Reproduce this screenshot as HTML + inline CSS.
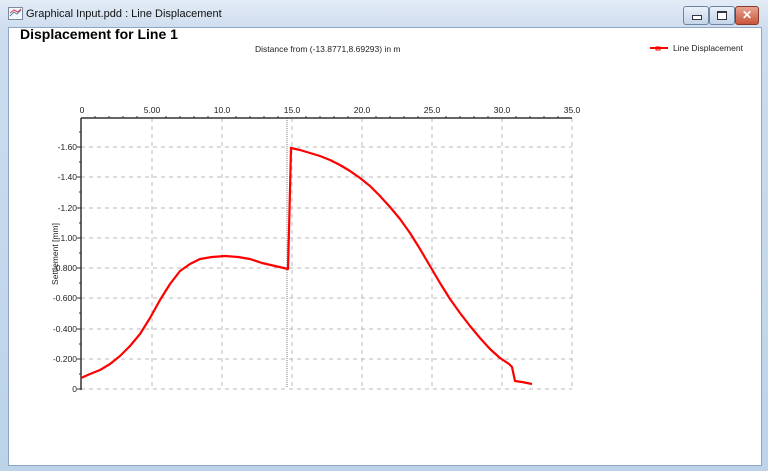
<!DOCTYPE html>
<html><head><meta charset="utf-8"><style>
html,body{margin:0;padding:0;width:768px;height:471px;overflow:hidden;background:#bcd3ea;font-family:"Liberation Sans",Arial,sans-serif}
.frame{position:absolute;left:0;top:0;width:768px;height:471px;background:linear-gradient(#e3ecf6,#cddcee 30px,#bcd3ea);}
.title{position:absolute;left:26px;top:8px;font-size:11px;color:#111}
.client{position:absolute;left:8px;top:27px;width:752px;height:437px;background:#fff;border:1px solid #8da7c4}
.btn{position:absolute;top:6px;height:17px;border:1px solid #6d85a3;border-radius:3px;background:linear-gradient(#e9f0f8,#c5d5e8)}
</style></head><body>
<div class="frame"></div>
<svg style="position:absolute;left:8px;top:7px" width="15" height="13"><rect x="0.5" y="0.5" width="14" height="12" fill="#f4f7fb" stroke="#7a8aa0"/><path d="M2 9 L6 5 L9 7 L13 3" stroke="#5d7fb0" fill="none"/><path d="M2 6 L6 3 L10 5 L13 2" stroke="#d44" fill="none"/></svg>
<div class="title">Graphical Input.pdd : Line Displacement</div>
<div class="btn" style="left:683px;width:24px"><div style="position:absolute;left:8px;top:8px;width:8px;height:3px;background:#fff;border:1px solid #334"></div></div>
<div class="btn" style="left:709px;width:24px"><div style="position:absolute;left:7px;top:4px;width:8px;height:6px;border:1px solid #334;border-top-width:2px;background:#fff"></div></div>
<div class="btn" style="left:735px;width:22px;background:linear-gradient(#e8a392,#c8553c);border-color:#8a3a2a;color:#fff;font-weight:bold;font-size:12px;text-align:center;line-height:16px">✕</div>
<div class="client"></div>
<svg style="position:absolute;left:0;top:0" width="768" height="471" font-family="Liberation Sans, Arial, sans-serif">
<text x="20" y="39" font-size="14" font-weight="bold" fill="#000">Displacement for Line 1</text>
<text x="255" y="52" font-size="8.5" fill="#222">Distance from (-13.8771,8.69293) in m</text>
<line x1="650" y1="48" x2="668" y2="48" stroke="#f00" stroke-width="2"/>
<rect x="656" y="47" width="4" height="3" fill="none" stroke="#f00"/>
<text x="673" y="51" font-size="8.5" fill="#222">Line Displacement</text>
<g stroke="#bbb" stroke-dasharray="4,4" stroke-width="1">
<line x1="152" y1="118" x2="152" y2="389"/><line x1="222" y1="118" x2="222" y2="389"/><line x1="292" y1="118" x2="292" y2="389"/><line x1="362" y1="118" x2="362" y2="389"/><line x1="432" y1="118" x2="432" y2="389"/><line x1="502" y1="118" x2="502" y2="389"/><line x1="572" y1="118" x2="572" y2="389"/>
<line x1="81" y1="147" x2="572" y2="147"/><line x1="81" y1="177" x2="572" y2="177"/><line x1="81" y1="208" x2="572" y2="208"/><line x1="81" y1="238" x2="572" y2="238"/><line x1="81" y1="268" x2="572" y2="268"/><line x1="81" y1="298" x2="572" y2="298"/><line x1="81" y1="329" x2="572" y2="329"/><line x1="81" y1="359" x2="572" y2="359"/><line x1="81" y1="389" x2="572" y2="389"/>
</g>
<line x1="287" y1="118" x2="287" y2="388" stroke="#777" stroke-dasharray="1,1"/>
<line x1="81" y1="118" x2="572" y2="118" stroke="#333" stroke-width="1.5"/>
<line x1="81" y1="118" x2="81" y2="390" stroke="#333" stroke-width="1.5"/>
<g stroke="#333"><path d="M95 118v-2M109 118v-2M123 118v-2M137 118v-2M166 118v-2M180 118v-2M194 118v-2M208 118v-2M236 118v-2M250 118v-2M264 118v-2M278 118v-2M306 118v-2M320 118v-2M334 118v-2M348 118v-2M376 118v-2M390 118v-2M404 118v-2M418 118v-2M446 118v-2M460 118v-2M474 118v-2M488 118v-2M516 118v-2M530 118v-2M544 118v-2M558 118v-2"/>
<path d="M81 132h-2M81 162h-2M81 192h-2M81 223h-2M81 253h-2M81 283h-2M81 313h-2M81 344h-2M81 374h-2M81 147h-4M81 177h-4M81 208h-4M81 238h-4M81 268h-4M81 298h-4M81 329h-4M81 359h-4M81 389h-4"/></g>
<g font-size="8.5" fill="#222" text-anchor="middle">
<text x="82" y="113">0</text><text x="152" y="113">5.00</text><text x="222" y="113">10.0</text><text x="292" y="113">15.0</text><text x="362" y="113">20.0</text><text x="432" y="113">25.0</text><text x="502" y="113">30.0</text><text x="572" y="113">35.0</text></g>
<g font-size="8.5" fill="#222" text-anchor="end">
<text x="77" y="150">-1.60</text><text x="77" y="180">-1.40</text><text x="77" y="211">-1.20</text><text x="77" y="241">-1.00</text><text x="77" y="271">-0.800</text><text x="77" y="301">-0.600</text><text x="77" y="332">-0.400</text><text x="77" y="362">-0.200</text><text x="77" y="392">0</text></g>
<text transform="translate(58,254) rotate(-90)" font-size="8.5" fill="#222" text-anchor="middle">Settlement [mm]</text>
<polyline fill="none" stroke="#f00" stroke-width="2.2" stroke-linejoin="round" points="81,378 90,374 100,370 110,364 120,356 130,346 140,334 150,318 160,300 170,284 180,271 190,264 200,259 212,257 225,256 238,257 250,259 262,263 275,266 288,269 289,230 290,190 291,148 300,150 310,153 320,156 330,160 340,165 350,171 360,178 370,186 380,196 390,207 400,219 410,233 420,249 430,266 440,283 450,299 460,313 470,326 480,338 490,349 500,358 509,364 512,367 515,381 522,382 532,384"/>
</svg>
</body></html>
